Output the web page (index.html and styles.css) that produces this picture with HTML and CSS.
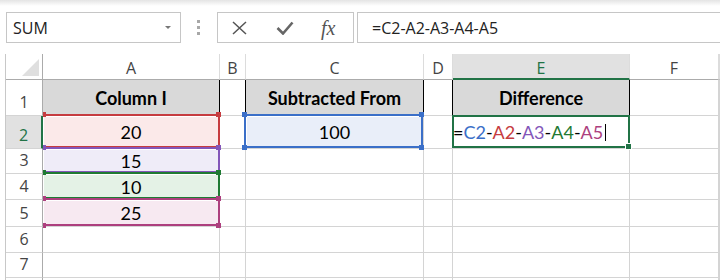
FILE: index.html
```html
<!DOCTYPE html>
<html lang="en">
<head>
    <meta charset="UTF-8">
    <meta name="viewport" content="width=device-width, initial-scale=1.0">
    <title>Subtract cells</title>
    <link rel="stylesheet" href="styles.css">
</head>
<body>
    <div class="ribbon">
        <div class="namebox"><span class="name">SUM</span><span class="caret"></span></div>
        <div class="grip"><i></i><i></i><i></i></div>
        <div class="fxbar">
            <svg class="ico-x" width="15" height="14" viewBox="0 0 15 14">
                <path d="M1 1 L14 13 M14 1 L1 13" stroke="#555" stroke-width="1.5" fill="none"/>
            </svg>
            <svg class="ico-ok" width="18" height="14" viewBox="0 0 18 14">
                <path d="M1.5 7 L7 12.5 L16.5 1.5" stroke="#666" stroke-width="2.6" fill="none"/>
            </svg>
            <span class="fx">fx</span>
        </div>
        <div class="formula">=C2-A2-A3-A4-A5</div>
    </div>

    <div class="sheet">
        <div class="corner"><span class="tri"></span></div>
        <div class="colhead">A</div>
        <div class="colhead">B</div>
        <div class="colhead">C</div>
        <div class="colhead">D</div>
        <div class="colhead sel">E</div>
        <div class="colhead">F</div>
        <div class="colhead"></div>

        <div class="rowhead">1</div>
        <div class="cell hdr">Column I</div>
        <div class="cell edge"></div>
        <div class="cell hdr">Subtracted From</div>
        <div class="cell edge"></div>
        <div class="cell hdr">Difference</div>
        <div class="cell"></div>
        <div class="cell"></div>

        <div class="rowhead sel">2</div>
        <div class="cell fill-red">20<span class="ref r-red"></span></div>
        <div class="cell"></div>
        <div class="cell fill-blue">100<span class="ref full r-blue"></span></div>
        <div class="cell"></div>
        <div class="cell editing">
            <span class="entry">=<span class="t-blue">C2</span>-<span class="t-red">A2</span>-<span class="t-purple">A3</span>-<span class="t-green">A4</span>-<span class="t-pink">A5</span></span><span class="cursor"></span>
            <span class="active-box"></span>
        </div>
        <div class="cell"></div>
        <div class="cell"></div>

        <div class="rowhead">3</div>
        <div class="cell fill-purple">15<span class="ref r-purple"></span></div>
        <div class="cell"></div>
        <div class="cell"></div>
        <div class="cell"></div>
        <div class="cell"></div>
        <div class="cell"></div>
        <div class="cell"></div>

        <div class="rowhead">4</div>
        <div class="cell fill-green">10<span class="ref r-green"></span></div>
        <div class="cell"></div>
        <div class="cell"></div>
        <div class="cell"></div>
        <div class="cell"></div>
        <div class="cell"></div>
        <div class="cell"></div>

        <div class="rowhead">5</div>
        <div class="cell fill-pink">25<span class="ref r-pink"></span></div>
        <div class="cell"></div>
        <div class="cell"></div>
        <div class="cell"></div>
        <div class="cell"></div>
        <div class="cell"></div>
        <div class="cell"></div>

        <div class="rowhead">6</div>
        <div class="cell"></div>
        <div class="cell"></div>
        <div class="cell"></div>
        <div class="cell"></div>
        <div class="cell"></div>
        <div class="cell"></div>
        <div class="cell"></div>

        <div class="rowhead">7</div>
        <div class="cell"></div>
        <div class="cell"></div>
        <div class="cell"></div>
        <div class="cell"></div>
        <div class="cell"></div>
        <div class="cell"></div>
        <div class="cell"></div>

        <div class="rowhead"></div>
        <div class="cell"></div>
        <div class="cell"></div>
        <div class="cell"></div>
        <div class="cell"></div>
        <div class="cell"></div>
        <div class="cell"></div>
        <div class="cell"></div>
    </div>
</body>
</html>
```

FILE: styles.css
```css
body {
    margin: 0;
    background: #fff;
    font-family: "Open Sans", sans-serif;
    overflow: hidden;
}

/* formula bar */
.ribbon {
    height: 54px;
    box-sizing: border-box;
    padding-top: 12px;
    display: flex;
    align-items: flex-start;
    background: linear-gradient(#e4e4e4, #fff 6px);
}
.namebox {
    margin-left: 6px;
    width: 175px;
    height: 31px;
    box-sizing: border-box;
    border: 1px solid #c6c6c6;
    background: #fff;
    display: flex;
    align-items: center;
    justify-content: space-between;
    padding: 0 9px 0 6px;
}
.name {
    font-size: 16px;
    color: #222;
}
.caret {
    border-left: 3.5px solid transparent;
    border-right: 3.5px solid transparent;
    border-top: 3px solid #777;
}
.grip {
    margin-left: 16px;
    padding-top: 8px;
    display: flex;
    flex-direction: column;
    gap: 3px;
}
.grip i {
    width: 3px;
    height: 3px;
    background: #a8a8a8;
}
.fxbar {
    margin-left: 17px;
    width: 137px;
    height: 31px;
    box-sizing: border-box;
    border: 1px solid #c6c6c6;
    background: #fff;
    display: flex;
    align-items: center;
    padding-left: 14px;
}
.ico-ok {
    margin-left: 29px;
}
.fx {
    margin-left: 27px;
    font-family: "Liberation Serif", serif;
    font-style: italic;
    font-size: 20px;
    color: #555;
    line-height: 1;
}
.formula {
    flex: 1;
    margin-left: 3px;
    height: 31px;
    box-sizing: border-box;
    border: 1px solid #c6c6c6;
    border-right: 0;
    background: #fff;
    display: flex;
    align-items: center;
    padding-left: 14px;
    font-size: 16px;
    color: #222;
}

/* grid */
.sheet {
    margin-left: 5px;
    height: 226px;
    overflow: hidden;
    border-left: 1px solid #c8c8c8;
    display: grid;
    grid-template-columns: 37px 177px 26px 178px 29px 177px 89px 1fr;
    grid-template-rows: 26px 36px 33px 25px 26px 27px 26px 25px 26px;
}
.corner {
    border-right: 1px solid #ababab;
    border-bottom: 1px solid #ababab;
    position: relative;
}
.tri {
    position: absolute;
    right: 3px;
    bottom: 3px;
    width: 0;
    height: 0;
    border-left: 17px solid transparent;
    border-bottom: 17px solid #dfdfdf;
}
.colhead {
    box-sizing: border-box;
    border-right: 1px solid #dcdcdc;
    border-bottom: 1px solid #ababab;
    display: flex;
    justify-content: center;
    align-items: center;
    padding-top: 3px;
    font-size: 16px;
    color: #444;
}
.colhead.sel {
    background: #e1e1e1;
    color: #217346;
    border-bottom: 2px solid #217346;
}
.rowhead {
    box-sizing: border-box;
    border-right: 1px solid #ababab;
    border-bottom: 1px solid #d4d4d4;
    display: flex;
    justify-content: center;
    align-items: flex-end;
    padding-bottom: 3px;
    font-size: 16px;
    line-height: 20px;
    color: #444;
}
.rowhead.sel {
    background: #e1e1e1;
    color: #217346;
    border-right: 2px solid #217346;
}
.cell {
    box-sizing: border-box;
    position: relative;
    border-right: 1px solid #d4d4d4;
    border-bottom: 1px solid #d4d4d4;
    display: flex;
    align-items: center;
    justify-content: center;
    font-family: Lato, "Open Sans", sans-serif;
    font-size: 18px;
    color: #000;
}
.cell.hdr {
    background: #d9d9d9;
    font-weight: 700;
    border-right-color: #000;
}
.cell.edge {
    border-right-color: #000;
}
.fill-red { background: #fbe9e9; box-shadow: inset 0 0 0 1px #fff; }
.fill-purple { background: #efecf8; box-shadow: inset 0 0 0 1px #fff; }
.fill-green { background: #e4f2e6; box-shadow: inset 0 0 0 1px #fff; }
.fill-pink { background: #f7e9f1; box-shadow: inset 0 0 0 1px #fff; }
.fill-blue { background: #e9eef9; box-shadow: inset 0 0 0 1px #fff; }

/* coloured reference frames */
.ref {
    position: absolute;
    left: 0;
    top: -4px;
    right: -2px;
    bottom: -2px;
    z-index: 1;
    background:
        linear-gradient(var(--c), var(--c)) 0 2px / calc(100% - 1px) 2px no-repeat,
        linear-gradient(var(--c), var(--c)) 0 calc(100% - 2px) / calc(100% - 1px) 2px no-repeat,
        linear-gradient(var(--c), var(--c)) calc(100% - 1px) 0 / 2px 100% no-repeat,
        linear-gradient(var(--c), var(--c)) 0 0 / 3px 5px no-repeat,
        linear-gradient(var(--c), var(--c)) 100% 0 / 5px 5px no-repeat,
        linear-gradient(var(--c), var(--c)) 0 100% / 3px 5px no-repeat,
        linear-gradient(var(--c), var(--c)) 100% 100% / 5px 5px no-repeat;
}
.ref.full {
    left: -4px;
    right: -1px;
    background:
        linear-gradient(var(--c), var(--c)) 0 2px / 100% 2px no-repeat,
        linear-gradient(var(--c), var(--c)) 0 calc(100% - 2px) / 100% 2px no-repeat,
        linear-gradient(var(--c), var(--c)) 2px 0 / 2px 100% no-repeat,
        linear-gradient(var(--c), var(--c)) calc(100% - 1px) 0 / 2px 100% no-repeat,
        linear-gradient(var(--c), var(--c)) 0 0 / 5px 5px no-repeat,
        linear-gradient(var(--c), var(--c)) 100% 0 / 5px 5px no-repeat,
        linear-gradient(var(--c), var(--c)) 0 100% / 5px 5px no-repeat,
        linear-gradient(var(--c), var(--c)) 100% 100% / 5px 5px no-repeat;
}
.r-red { --c: #c63c40; }
.r-purple { --c: #8356b9; }
.r-green { --c: #1f7a33; }
.r-pink { --c: #ad3f7e; }
.r-blue { --c: #3b6fc8; }

/* cell being edited */
.cell.editing {
    justify-content: flex-start;
}
.entry {
    position: relative;
    z-index: 3;
}
.t-blue { color: #3b6fc8; }
.t-red { color: #c63c40; }
.t-purple { color: #8356b9; }
.t-green { color: #1f7a33; }
.t-pink { color: #ad3f7e; }
.cursor {
    width: 1px;
    height: 17px;
    margin-left: 2px;
    background: #000;
}
.active-box {
    position: absolute;
    left: -1px;
    top: -1px;
    right: -1px;
    bottom: 0;
    border: 2px solid #217346;
    z-index: 2;
}
.active-box::after {
    content: "";
    position: absolute;
    right: -4px;
    bottom: -4px;
    width: 5px;
    height: 5px;
    background: #217346;
    border: 1px solid #fff;
}
```
